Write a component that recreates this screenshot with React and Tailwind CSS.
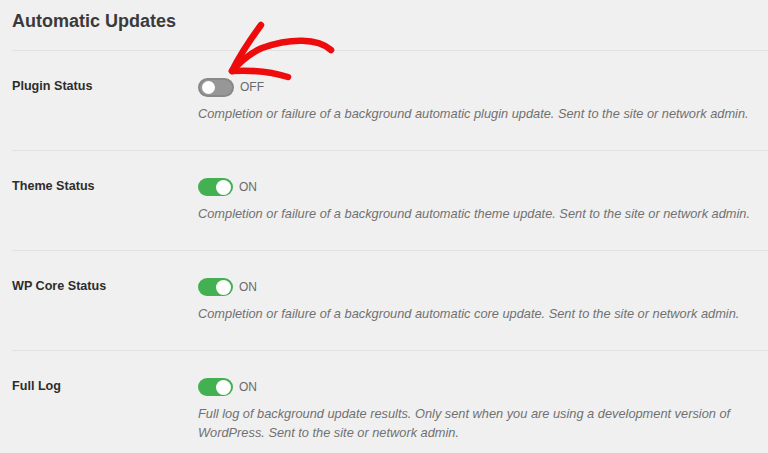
import React from 'react';

const rows = [
  { label: 'Plugin Status', on: false, desc: 'Completion or failure of a background automatic plugin update. Sent to the site or network admin.' },
  { label: 'Theme Status', on: true, desc: 'Completion or failure of a background automatic theme update. Sent to the site or network admin.' },
  { label: 'WP Core Status', on: true, desc: 'Completion or failure of a background automatic core update. Sent to the site or network admin.' },
  { label: 'Full Log', on: true, desc: 'Full log of background update results. Only sent when you are using a development version of WordPress. Sent to the site or network admin.' },
];

const Toggle = ({ on }) =>
  on ? (
    <span className="flex h-[18px] w-[35px] items-center justify-end rounded-full bg-[#43b052] pr-[2px]">
      <span className="h-[15px] w-[15px] rounded-full bg-white" />
    </span>
  ) : (
    <span className="flex h-[19px] w-[36px] items-center rounded-full border-2 border-[#888888] bg-[#979797] pl-[2px]">
      <span className="h-[13px] w-[13px] rounded-full bg-white" />
    </span>
  );

export default function App() {
  return (
    <div className="relative h-[453px] w-[768px] overflow-hidden bg-[#f0f0f0] pl-3 font-['Liberation_Sans',Arial,sans-serif] text-[#3c3c3c]">
      <h2 className="pt-[9px] pb-[17px] text-[18px] font-bold leading-[24px] text-[#3a3a3a]">Automatic Updates</h2>
      {rows.map((r) => (
        <div key={r.label} className="flex h-[100px] border-t border-[#e2e2e2] pt-[27px]">
          <div className="-mt-[1px] w-[186px] text-[12.6px] font-bold text-[#2d2d2d]">{r.label}</div>
          <div className="flex-1">
            <div className="flex h-[18px] items-center gap-[6px]">
              <Toggle on={r.on} />
              <span className="text-[12px] text-[#6a6a6a]">{r.on ? 'ON' : 'OFF'}</span>
            </div>
            <p className="mt-[8px] text-[12.8px] italic leading-[19px] text-[#707070]">{r.desc}</p>
          </div>
        </div>
      ))}
      <svg className="absolute left-0 top-0" width="768" height="453" viewBox="0 0 768 453" fill="none">
        <path d="M331 50 C 318 38, 290 38, 262 48 C 250 53, 240 62, 232 71" stroke="#ee0b0b" strokeWidth="6.5" strokeLinecap="round" strokeLinejoin="round" />
        <path d="M261 25 C 250 40, 240 55, 232 71 C 250 70, 272 72, 288 77" stroke="#ee0b0b" strokeWidth="6.5" strokeLinecap="round" strokeLinejoin="round" />
      </svg>
    </div>
  );
}
